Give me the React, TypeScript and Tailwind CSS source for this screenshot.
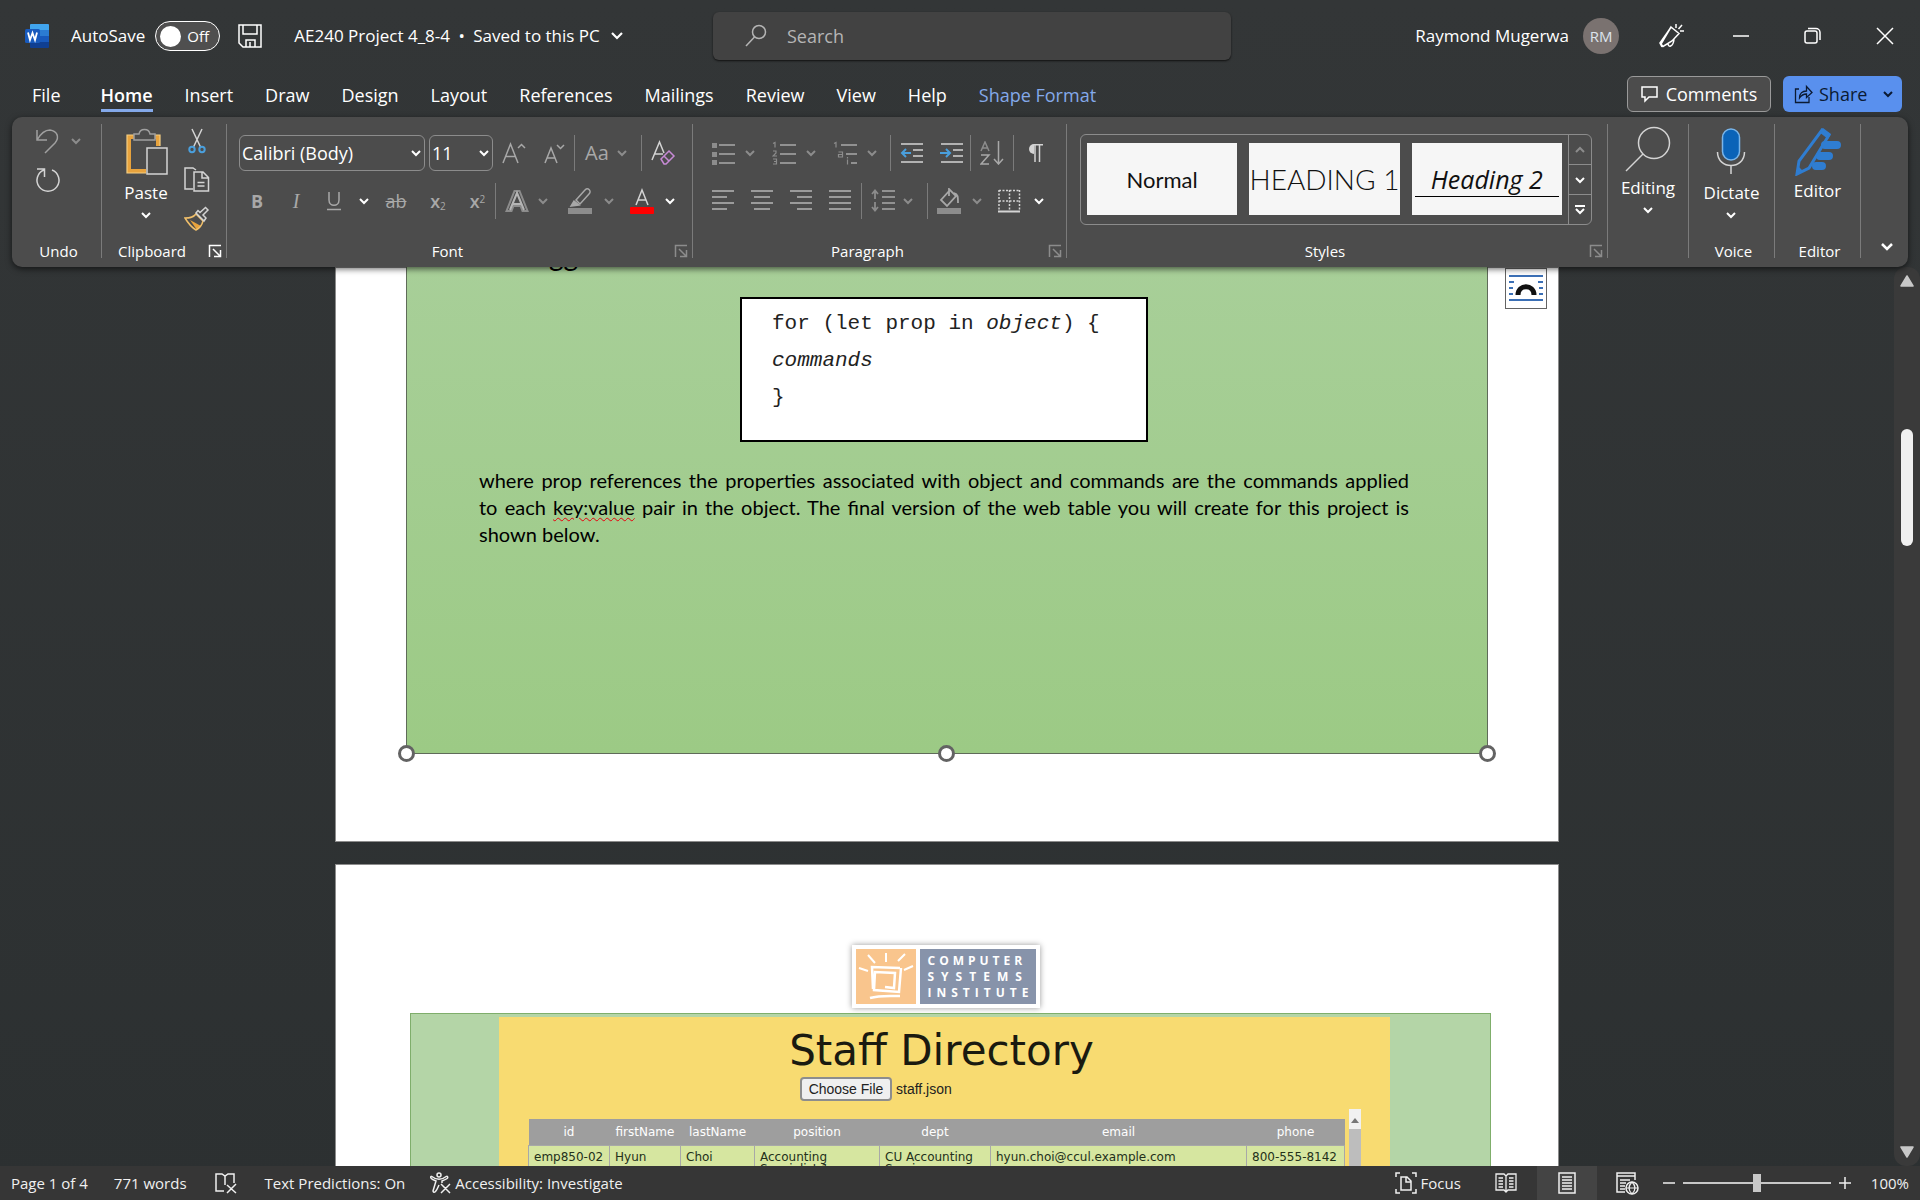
import { useState } from 'react';
import type { ReactNode } from 'react';
import { clsx } from 'clsx';

const TABS = ['File', 'Home', 'Insert', 'Draw', 'Design', 'Layout', 'References', 'Mailings', 'Review', 'View', 'Help', 'Shape Format'];

const COLUMNS = [
  { name: 'id', value: 'emp850-02', width: 'w-[81px]' },
  { name: 'firstName', value: 'Hyun', width: 'w-[71px]' },
  { name: 'lastName', value: 'Choi', width: 'w-[74px]' },
  { name: 'position', value: 'Accounting Specialist 1', width: 'w-[125px]' },
  { name: 'dept', value: 'CU Accounting Services', width: 'w-[111px]' },
  { name: 'email', value: 'hyun.choi@ccul.example.com', width: 'w-[256px]' },
  { name: 'phone', value: '800-555-8142', width: 'w-[98px]' },
];

/* ---------- Shared bits ---------- */

function Svg({ w = 24, h = 24, children, className }: { w?: number; h?: number; children: ReactNode; className?: string }) {
  return (
    <svg
      width={w}
      height={h}
      viewBox={`0 0 ${w} ${h}`}
      fill="none"
      stroke="currentColor"
      strokeWidth="1.5"
      aria-hidden="true"
      className={clsx('shrink-0', className)}
    >
      {children}
    </svg>
  );
}

function Chevron({ className }: { className?: string }) {
  return (
    <Svg w={10} h={8} className={className}>
      <path d="M1 2l4 4 4-4" strokeWidth="2" />
    </Svg>
  );
}

function Tool({ label, width, dim, children }: { label: string; width: string; dim?: boolean; children: ReactNode }) {
  return (
    <button
      type="button"
      aria-label={label}
      className={clsx('flex h-9 shrink-0 items-center justify-center', width, dim ? 'text-[#8c8c8c]' : 'text-[#d4d4d4]')}
    >
      {children}
    </button>
  );
}

function Sep() {
  return <div className="h-9 w-px shrink-0 bg-[#7b7b7b]" />;
}

function Launcher({ label, dim }: { label: string; dim?: boolean }) {
  return (
    <button type="button" aria-label={label} className={clsx('absolute right-1 bottom-0', dim ? 'text-[#8c8c8c]' : 'text-white')}>
      <Svg w={14} h={14}>
        <path d="M1.500 13V1.500H13M5 5l7 7M12.500 6v6.500H6" />
      </Svg>
    </button>
  );
}

function Group({ label, width, launcher, dim, children }: {
  label?: string;
  width: string;
  launcher?: boolean;
  dim?: boolean;
  children: ReactNode;
}) {
  return (
    <section className={clsx('relative flex flex-col border-r border-[#7b7b7b]', width)}>
      <div className="min-h-0 flex-1">{children}</div>
      {label && (
        <div className={clsx('text-center text-[15px] leading-[14px] text-white', launcher ? 'pr-6' : 'pl-1')}>{label}</div>
      )}
      {launcher && <Launcher label={`${label} settings`} dim={dim} />}
    </section>
  );
}

/* ---------- Title bar ---------- */

function WordLogo() {
  return (
    <Svg w={26} h={26}>
      <g stroke="none">
        <path d="M6 2a1 1 0 0 1 1-1h17a1 1 0 0 1 1 1v5H6z" fill="#41a5ee" />
        <path d="M6 7h19v6H6z" fill="#2b7cd3" />
        <path d="M6 13h19v6H6z" fill="#185abd" />
        <path d="M6 19h19v5a1 1 0 0 1-1 1H7a1 1 0 0 1-1-1z" fill="#103f91" />
        <rect x="1" y="6" width="15" height="14" rx="1.500" fill="#185abd" />
      </g>
      <path d="M4 9.500l2 7.500 2.500-7 2.500 7 2-7.500" stroke="#fff" strokeWidth="1.800" />
    </Svg>
  );
}

function TitleBar() {
  const [autoSave, setAutoSave] = useState(false);

  return (
    <header className="flex h-[72px] shrink-0 items-center pl-6 text-white">
      <div className="flex flex-1 items-center pr-[26px]">
        <WordLogo />
        <label className="ml-[21px] flex items-center gap-2.5 text-[17px]">
          AutoSave
          <input type="checkbox" className="sr-only" checked={autoSave} onChange={e => setAutoSave(e.target.checked)} />
          <span className="flex h-[30px] w-[65px] items-center gap-1.5 rounded-full border border-white bg-[#4f4f4f] pl-1">
            <span className="h-[21px] w-[21px] rounded-full bg-white" />
            <span className="text-[15px]">{autoSave ? 'On' : 'Off'}</span>
          </span>
        </label>
        <button type="button" aria-label="Save" className="ml-[18px]">
          <Svg>
            <path d="M1 1h22v22H5l-4-4zM5 1v9h14V1M8 23v-7h9v7M12 18v5" />
          </Svg>
        </button>
        <button type="button" className="ml-8 flex items-center gap-2.5 text-[17px] whitespace-nowrap">
          <span>AE240 Project 4_8-4 <span className="mx-1">•</span> Saved to this PC</span>
          <Svg w={14} h={10}>
            <path d="M2 2l5 5 5-5" strokeWidth="2.200" />
          </Svg>
        </button>
      </div>

      <label className="flex h-12 w-[518px] items-center gap-5 rounded-md bg-[#424242] px-8 text-[#b5b5b5] shadow-[0_1px_2px_#111]">
        <Svg w={22} h={24}>
          <circle cx="14" cy="8" r="6.500" />
          <path d="M9.500 13L1 22" />
        </Svg>
        <input type="text" aria-label="Search" placeholder="Search" className="w-full bg-transparent text-[18px] outline-none placeholder:text-[#b5b5b5]" />
      </label>

      <div className="flex flex-1 items-center justify-end pr-[26px]">
        <span className="text-[17px]">Raymond Mugerwa</span>
        <span className="ml-3.5 flex h-9 w-9 items-center justify-center rounded-full bg-[#7a7270] text-[15px] text-[#dde3ec]">RM</span>
        <button type="button" aria-label="Coming soon" className="ml-[39px]">
          <Svg w={26} h={26}>
            <path d="M13 4l8 6.500-7 7.500-9 5.500-2-2.500zM13 4c-3 5-6 9-11 16l2 4M10 20.500c0 4 5 4 6-4M18 1v4M24 2l-3.500 4M22 8h4" />
          </Svg>
        </button>
        <button type="button" aria-label="Minimize" className="ml-[49px]">
          <Svg w={16} h={18}><path d="M0 9h16" /></Svg>
        </button>
        <button type="button" aria-label="Restore" className="ml-[55px]">
          <Svg w={17} h={18}>
            <rect x="1" y="4" width="12" height="12" rx="2" />
            <path d="M4 1.500h8a4 4 0 0 1 4 4V13" />
          </Svg>
        </button>
        <button type="button" aria-label="Close" className="ml-[55px]">
          <Svg w={18} h={18}><path d="M1 1l16 16M17 1L1 17" /></Svg>
        </button>
      </div>
    </header>
  );
}

function TabBar() {
  return (
    <nav className="flex h-[45px] shrink-0 items-start pt-1 pr-[18px] pl-8 text-[18px] text-white">
      <div className="flex flex-1 gap-8 pt-1.5 whitespace-nowrap">
        {TABS.map(tab => (
          <a
            key={tab}
            href="#"
            className={clsx(
              'border-b-[3px] leading-[27px]',
              tab === 'File' && 'mr-2',
              tab === 'Home' ? 'border-[#84a9ea] font-semibold' : 'border-transparent',
              tab === 'Shape Format' && 'text-[#84a9ea]',
            )}
          >
            {tab}
          </a>
        ))}
      </div>
      <button type="button" className="flex h-9 w-36 items-center justify-center gap-2 rounded-md border border-[#9a9a9a] bg-[#4c4c4c]">
        <Svg w={17} h={18}><path d="M1 2h15v10H8l-4 4v-4H1z" /></Svg>
        Comments
      </button>
      <button type="button" className="ml-3 flex h-9 w-[119px] items-center rounded-md bg-[#5990ee] pl-[11px] text-[#0b1a33]">
        <Svg w={19} h={20}>
          <path d="M5 5H1.500v13.500H15V13M5.500 14c0-5 3-7 7-7V2.500L18 8.500l-5.500 5V10c-3 0-5 1-7 4z" strokeWidth="1.300" />
        </Svg>
        <span className="ml-1.5">Share</span>
        <Chevron className="ml-4" />
      </button>
    </nav>
  );
}

/* ---------- Ribbon ---------- */

function UndoGroup() {
  return (
    <Group label="Undo" width="w-[90px]">
      <div className="flex flex-col gap-[13px] pt-1 pl-[23px]">
        <div className="flex items-center gap-2.5 text-[#8c8c8c]">
          <button type="button" aria-label="Undo">
            <Svg w={26} h={26} className="text-[#a0a0a0]"><path d="M2 2v10h10M2 12C6 5 10 2 15 2c7 1 10 7 5 13L10 25" /></Svg>
          </button>
          <Chevron />
        </div>
        <button type="button" aria-label="Repeat" className="w-[26px] text-[#d4d4d4]">
          <Svg w={26} h={26}><path d="M2 2h7.500v8M9 3a11 11 0 1 0 8 0" /></Svg>
        </button>
      </div>
    </Group>
  );
}

function ClipboardGroup() {
  return (
    <Group label="Clipboard" width="w-[125px]" launcher>
      <div className="flex pt-1 pl-[22px]">
        <button type="button" className="flex w-[44px] flex-col items-center text-[17px] leading-6 text-white">
          <Svg w={44} h={48}>
            <path d="M12 9H5v34h17M27 9h7v9" stroke="#e8a33d" strokeWidth="4" />
            <path d="M12 7H3v38h19M26 7h10v11" stroke="#f6cf83" strokeWidth="1.200" />
            <path d="M10 12V6h5c1-6 10-6 11 0h5v6z" stroke="#a0a0a0" fill="#4c4c4c" />
            <rect x="23" y="20" width="20" height="26" stroke="#d4d4d4" fill="#4c4c4c" />
          </Svg>
          <span className="mt-[5px]">Paste</span>
          <Chevron className="mt-1.5" />
        </button>
        <div className="ml-4 flex flex-col gap-[13px] text-[#d4d4d4]">
          <button type="button" aria-label="Cut">
            <Svg w={26} h={26}>
              <path d="M8 1l8.500 18M18 1L9.500 19" />
              <circle cx="8" cy="21.500" r="2.700" stroke="#4a9fdc" strokeWidth="2" />
              <circle cx="18" cy="21.500" r="2.700" stroke="#4a9fdc" strokeWidth="2" />
            </Svg>
          </button>
          <button type="button" aria-label="Copy">
            <Svg w={26} h={26}><path d="M9 22H1V1h8l3 2M10 5h9l5.500 5.500V24H10zM18 5v6h6M13.500 15.500h7M13.500 19h7" /></Svg>
          </button>
          <button type="button" aria-label="Format Painter">
            <Svg w={26} h={26}>
              <path d="M6 14l11 6-4 4z" fill="#e8a33d" stroke="none" />
              <path d="M12 8C9 12 5 12 1 12c3 5 6 9 11 12 4-2 6-5 7-9z" stroke="#f0bf6a" />
              <path d="M12 7l8 8 2-3-3-3 5-5-2.500-2.500-5.500 5-2-2z" />
            </Svg>
          </button>
        </div>
      </div>
    </Group>
  );
}

function FontGroup() {
  return (
    <Group label="Font" width="w-[466px]" launcher dim>
      <div className="flex flex-col gap-3 pt-[11px] pl-3">
        <div className="flex items-center">
          <span className="relative mr-1 w-[186px]">
            <select aria-label="Font" className="h-9 w-full appearance-none rounded-md border border-[#8c8c8c] bg-transparent pl-0.5 text-[18px] text-white">
              <option>Calibri (Body)</option>
            </select>
            <Chevron className="pointer-events-none absolute top-3.5 right-1 text-white" />
          </span>
          <span className="relative w-16">
            <select aria-label="Font size" className="h-9 w-full appearance-none rounded-md border border-[#8c8c8c] bg-transparent pl-0.5 text-[18px] text-white">
              <option>11</option>
            </select>
            <Chevron className="pointer-events-none absolute top-3.5 right-1 text-white" />
          </span>
          <Tool label="Grow font" width="w-[42px]" dim>
            <Svg className="text-[#a8a8a8]"><path d="M1 22L8.500 3 16 22M4 15.500h9.500M16 7l3.500-3.500L23 7" /></Svg>
          </Tool>
          <Tool label="Shrink font" width="w-[39px]" dim>
            <Svg className="text-[#a8a8a8]"><path d="M2 22L8 7l6 15M4.500 17h7M14 4l3.500 3.500L21 4" /></Svg>
          </Tool>
          <Sep />
          <Tool label="Change case" width="w-[66px]" dim>
            <span className="mr-2 text-[20px] text-[#a8a8a8]">Aa</span>
            <Chevron className="mr-1" />
          </Tool>
          <Sep />
          <Tool label="Clear formatting" width="w-[42px]">
            <Svg w={26} h={26}>
              <path d="M2 20L9.500 2 14 13M5 14h8" />
              <path d="M11 19l8-8 5 5-8 8h-2zM14 16l5 5" stroke="#c78ad6" />
            </Svg>
          </Tool>
        </div>
        <div className="flex items-center text-[#a8a8a8]">
          <Tool label="Bold" width="w-9" dim><b className="text-[18px] text-[#a8a8a8]">B</b></Tool>
          <Tool label="Italic" width="w-[42px]" dim><i className="font-['Liberation_Serif'] text-[20px] text-[#a8a8a8]">I</i></Tool>
          <Tool label="Underline" width="w-[34px]" dim>
            <Svg w={16} h={20} className="text-[#a8a8a8]"><path d="M3 1v8c0 7 10 7 10 0V1M1 18.500h14" /></Svg>
          </Tool>
          <Tool label="Underline style" width="w-[25px]"><Chevron className="text-white" /></Tool>
          <Tool label="Strikethrough" width="w-10" dim><s className="text-[18px] text-[#a8a8a8]">ab</s></Tool>
          <Tool label="Subscript" width="w-11" dim>
            <span className="text-[18px] font-semibold text-[#a8a8a8]">x<sub className="text-[10px] font-normal">2</sub></span>
          </Tool>
          <Tool label="Superscript" width="w-[35px]" dim>
            <span className="text-[18px] font-semibold text-[#a8a8a8]">x<sup className="text-[10px] font-normal">2</sup></span>
          </Tool>
          <Sep />
          <Tool label="Text effects" width="w-[42px]" dim>
            <Svg>
              <path d="M1.500 22L9.500 2h5l8 20h-5l-2-5h-7l-2 5z" strokeWidth="2" />
              <path d="M5 21L12 4l7 17M8 15h8" stroke="#b5b5b5" strokeWidth="2" />
            </Svg>
          </Tool>
          <Chevron className="mr-2 text-[#8c8c8c]" />
          <Tool label="Highlight color" width="w-12" dim>
            <Svg w={26} h={26}>
              <path d="M1 20h24v6H1z" fill="currentColor" stroke="none" />
              <path d="M9 12L18 2c3-3 7 1 4 4l-9 10zM9 12l4 4" stroke="#a8a8a8" />
              <path d="M7 13l5 4-8 1z" fill="#a8a8a8" stroke="#a8a8a8" />
            </Svg>
          </Tool>
          <Chevron className="mr-1 text-[#8c8c8c]" />
          <Tool label="Font color" width="w-[47px]">
            <Svg w={26} h={26}>
              <path d="M7 17L13 2l6 15M9 12h8" />
              <rect x="1" y="19" width="24" height="7" rx="1" fill="#f00" stroke="none" />
            </Svg>
          </Tool>
          <Chevron className="text-white" />
        </div>
      </div>
    </Group>
  );
}

function Split({ label, children }: { label: string; children: ReactNode }) {
  return (
    <div className="mr-0.5 flex items-center">
      <Tool label={label} width="w-[39px]" dim>{children}</Tool>
      <span className="flex w-5 justify-center pr-1 text-[#8c8c8c]"><Chevron /></span>
    </div>
  );
}

function ParagraphGroup() {
  return (
    <Group label="Paragraph" width="w-[374px]" launcher dim>
      <div className="flex flex-col gap-3 pt-[11px] pl-2.5">
        <div className="flex items-center">
          <Split label="Bullets">
            <Svg>
              <path d="M8 4h16M8 13h16M8 22h16" stroke="#a8a8a8" />
              <path d="M1 2h5v5H1zM1 11h5v5H1zM1 19h5v5H1z" fill="currentColor" stroke="none" />
            </Svg>
          </Split>
          <Split label="Numbering">
            <Svg>
              <path d="M8 4h16M8 13h16M8 22h16" stroke="#a8a8a8" />
              <path d="M1 2.500l2-1v5M1 10h3v2l-3 3h4M1 18h3.500v5H1M2 20.500h2" strokeWidth="1.200" />
            </Svg>
          </Split>
          <Split label="Multilevel list">
            <Svg>
              <path d="M8 4h16M13 13h11M18 22h6" stroke="#a8a8a8" />
              <path d="M1 2.500l2-1v5M5.500 11h4v5h-4v-2.500h4M14.500 18.500v5M14.500 16v1.500" strokeWidth="1.200" />
            </Svg>
          </Split>
          <span className="w-1" />
          <Sep />
          <Tool label="Decrease indent" width="w-[42px]">
            <Svg>
              <path d="M1 3h22M13 9h10M13 15h10M1 21h22" />
              <path d="M11 12H2M6 8l-4 4 4 4" stroke="#4a9fdc" strokeWidth="2" />
            </Svg>
          </Tool>
          <Tool label="Increase indent" width="w-[37px]">
            <Svg>
              <path d="M1 3h22M13 9h10M13 15h10M1 21h22" />
              <path d="M0 12h10M6 8l4 4-4 4" stroke="#4a9fdc" strokeWidth="2" />
            </Svg>
          </Tool>
          <Sep />
          <Tool label="Sort" width="w-[42px]" dim>
            <Svg>
              <path d="M1 10l4-9 4 9M2.500 7h5" />
              <path d="M1 14h8l-8 9h8M18.500 0v22M14 18l4.500 5 4.500-5" stroke="#a8a8a8" />
            </Svg>
          </Tool>
          <Sep />
          <Tool label="Show formatting marks" width="w-[42px]">
            <Svg w={16} h={20}>
              <path d="M7 1.700h9M8 1v18M12.500 1v18" />
              <path d="M7 11a5 5 0 1 1 0-10z" fill="currentColor" stroke="none" />
            </Svg>
          </Tool>
        </div>
        <div className="flex items-center">
          <Tool label="Align left" width="w-[39px]">
            <Svg className="text-[#b5b5b5]"><path d="M1 2h22M1 8h15M1 14h22M1 20h15" /></Svg>
          </Tool>
          <Tool label="Center" width="w-[39px]">
            <Svg className="text-[#b5b5b5]"><path d="M1 2h22M4 8h16M1 14h22M4 20h16" /></Svg>
          </Tool>
          <Tool label="Align right" width="w-[39px]">
            <Svg className="text-[#b5b5b5]"><path d="M1 2h22M8 8h15M1 14h22M8 20h15" /></Svg>
          </Tool>
          <Tool label="Justify" width="w-[39px]">
            <Svg className="text-[#b5b5b5]"><path d="M1 2h22M1 8h22M1 14h22M1 20h22" /></Svg>
          </Tool>
          <span className="w-0.5" />
          <Sep />
          <Tool label="Line spacing" width="w-[41px]" dim>
            <Svg>
              <path d="M11 2h13M11 8h13M11 14h13M11 20h13" stroke="#a8a8a8" />
              <path d="M4 2v8M4 13v8M1 5l3-3.500L7 5M1 18l3 3.500L7 18" strokeWidth="1.800" />
            </Svg>
          </Tool>
          <Chevron className="mr-[14px] text-[#8c8c8c]" />
          <Sep />
          <Tool label="Shading" width="w-[42px]" dim>
            <Svg w={24} h={26}>
              <path d="M0 20h24v6H0z" fill="currentColor" stroke="none" />
              <path d="M13 2L4 12l6 6 9-10-7-7v7M17 5c4 1 4 4 4 10" stroke="#a8a8a8" strokeWidth="1.800" />
            </Svg>
          </Tool>
          <span className="flex w-3.5 justify-center text-[#8c8c8c]"><Chevron /></span>
          <Tool label="Borders" width="w-[50px]">
            <Svg>
              <path d="M2 1.500h21M2 12h21M2 1v20M12.500 1v20M22.500 1v20" strokeDasharray="2 1.500" />
              <path d="M1 22.500h22" strokeWidth="2" />
            </Svg>
          </Tool>
          <Chevron className="text-white" />
        </div>
      </div>
    </Group>
  );
}

function StylesGroup() {
  return (
    <Group label="Styles" width="min-w-0 flex-1" launcher dim>
      <div className="mt-2.5 mr-[15px] ml-[13px] flex h-[91px] rounded-md border border-[#8c8c8c]">
        <div className="grid flex-1 grid-cols-3 items-start gap-3 overflow-hidden px-1.5 pt-2 font-['Lato'] whitespace-nowrap text-[#111]">
          <button type="button" className="h-[72px] bg-[#f6f6f6] text-[22px]">Normal</button>
          <button type="button" className="h-[72px] bg-[#f6f6f6] text-[28px] font-light">HEADING 1</button>
          <button type="button" className="h-[72px] bg-[#f6f6f6] px-[3px] font-['Open_Sans'] text-[25px] italic">
            <span className="block border-b border-black leading-[34px]">Heading 2</span>
          </button>
        </div>
        <div className="flex w-[23px] flex-col divide-y divide-[#8c8c8c] border-l border-[#8c8c8c] text-white">
          <button type="button" aria-label="Previous styles" className="flex flex-1 items-center justify-center text-[#8c8c8c]">
            <Chevron className="rotate-180" />
          </button>
          <button type="button" aria-label="Next styles" className="flex flex-1 items-center justify-center">
            <Chevron />
          </button>
          <button type="button" aria-label="More styles" className="flex flex-1 flex-col items-center justify-center">
            <span className="h-0.5 w-2.5 bg-white" />
            <Chevron />
          </button>
        </div>
      </div>
    </Group>
  );
}

function Ribbon() {
  return (
    <div className="relative z-10 mx-3 flex h-[150px] shrink-0 rounded-[10px] bg-[#4c4c4c] pt-[7px] pb-[9px] shadow-[0_2px_6px_rgba(0,0,0,0.6)]">
      <UndoGroup />
      <ClipboardGroup />
      <FontGroup />
      <ParagraphGroup />
      <StylesGroup />
      <Group width="w-[81px]">
        <button type="button" className="mx-auto flex flex-col items-center pt-0.5 text-[17px] leading-6 text-white">
          <Svg w={46} h={46} className="text-[#d4d4d4]">
            <circle cx="29" cy="17" r="15.500" />
            <path d="M18 28L1 45" />
          </Svg>
          <span className="mt-1">Editing</span>
          <Chevron className="mt-1.5" />
        </button>
      </Group>
      <Group label="Voice" width="w-[86px]">
        <button type="button" className="mx-auto flex flex-col items-center pt-1 text-[17px] leading-6 text-white">
          <Svg w={30} h={48} className="text-[#d4d4d4]">
            <rect x="6.500" y="1" width="17" height="31" rx="8.500" fill="#0a63b8" stroke="#79b5ea" />
            <path d="M1.500 24c0 18 27 18 27 0M15 37.500V46" />
          </Svg>
          <span className="mt-[5px]">Dictate</span>
          <Chevron className="mt-1.5" />
        </button>
      </Group>
      <Group label="Editor" width="w-[86px]">
        <button type="button" className="mx-auto flex flex-col items-center pt-1 text-[17px] leading-6 text-white">
          <Svg w={48} h={48} className="text-[#2f7dd1]">
            <path d="M28 2l7 5-20 33-12 6 2-13z" strokeWidth="3" />
            <path d="M25 4l4-4 8 6-3 5zM2 47l2-9 5 5z" fill="currentColor" stroke="none" />
            <path d="M31 17h12M26 28h9M22 38h6" strokeWidth="8" strokeLinecap="round" />
          </Svg>
          <span className="mt-[3px]">Editor</span>
        </button>
      </Group>
      <div className="flex w-[47px] items-end justify-end pr-3.5 pb-1.5">
        <button type="button" aria-label="Ribbon display options" className="text-white">
          <Svg w={14} h={10}><path d="M2 2l5 5 5-5" strokeWidth="2.500" /></Svg>
        </button>
      </div>
    </div>
  );
}

/* ---------- Document ---------- */

function Handle({ className }: { className: string }) {
  return <span className={clsx('absolute -bottom-[9px] h-[17px] w-[17px] rounded-full border-[3px] border-[#636363] bg-white', className)} />;
}

function PageOne() {
  return (
    <article className="relative w-full max-w-[1224px] border border-[#8c8c8c] bg-white pr-[70px] pb-[87px] pl-[70px]">
      <div className="relative -mt-[23px] border border-[#5f6b59] bg-linear-to-b from-[#a8cf99] to-[#9cca85] pr-[78px] pb-[205px] pl-[72px] font-['Lato'] text-[20px] leading-[27px] text-black">
        <p className="mb-[33px] pl-[70px] text-[28px] leading-[18px]">gg</p>
        <div className="ml-[261px] h-[145px] w-[408px] border-2 border-black bg-white pt-1.5 pl-[30px] font-['Liberation_Mono'] text-[21px] leading-[37px] text-[#222]">
          <div>for (let prop in <i>object</i>) {'{'}</div>
          <div><i>commands</i></div>
          <div>{'}'}</div>
        </div>
        <p className="mt-[25px] text-justify">
          where prop references the properties associated with object and commands are the commands applied to{'\u00a0'}each{' '}
          <span className="underline decoration-red-600 decoration-wavy decoration-1 underline-offset-2">key:value</span>{' '}
          pair in the object. The final version of the web table you will create for this project is shown below.
        </p>
        <Handle className="-left-[9px]" />
        <Handle className="left-1/2 -ml-[9px]" />
        <Handle className="-right-[9px]" />
      </div>
      <button type="button" aria-label="Layout options" className="absolute top-0 right-[11px] h-[41px] w-[42px] border border-[#636363] bg-white">
        <Svg w={40} h={38}>
          <path d="M3 6h34M3 12h5M32 12h5M3 18h4M33 18h4M3 24h4M33 24h4M3 30h34" stroke="#3b6fb5" strokeWidth="2" />
          <path d="M12 25c0-11 16-11 16 0" stroke="#111" strokeWidth="5" />
        </Svg>
      </button>
    </article>
  );
}

function InstituteLogo() {
  return (
    <div className="mx-auto flex h-[63px] w-[188px] gap-1 bg-white p-1 shadow-[0_0_6px_rgba(0,0,0,0.4)]">
      <div className="w-[60px] bg-[#f9c58d]">
        <Svg w={60} h={55} className="text-white">
          <path d="M12 6l7 8M30 4v9M49 5l-7 7M3 19l9 3M57 17l-9 4" strokeWidth="2" />
          <path d="M44 19l-28-1 1 22M45 19l-2 24-25-2 1-18 20 1-1 15-9-1M14 49c10-3 20-2 30-2" strokeWidth="2.500" />
        </Svg>
      </div>
      <div className="flex flex-1 flex-col justify-center bg-[#8793aa] pl-2 text-[12px] leading-4 font-bold text-white">
        <span className="tracking-[4px]">COMPUTER</span>
        <span className="tracking-[7px]">SYSTEMS</span>
        <span className="tracking-[5px]">INSTITUTE</span>
      </div>
    </div>
  );
}

function PageTwo() {
  return (
    <article className="mt-[22px] w-full max-w-[1224px] border border-b-0 border-[#8c8c8c] bg-white pt-20 pr-[67px] pl-[74px]">
      <div className="pr-2.5">
        <InstituteLogo />
      </div>
      <div className="mt-[5px] border border-b-0 border-[#7fae6b] bg-[#b4d5a7] px-[88px] pt-[3px] pr-[100px]">
        <div className="h-[300px] bg-[#f8db71] px-[29px] pt-2.5 font-['DejaVu_Sans']">
          <h1 className="pr-1.5 text-center text-[42px] leading-[48px] text-[#1a1a10]">Staff Directory</h1>
          <div className="mt-0.5 flex items-center gap-1 pl-[272px] font-['Liberation_Sans'] text-[14px] text-[#222]">
            <button type="button" className="h-6 w-[92px] rounded-sm border-2 border-[#8d8d8d] bg-[#efefef] leading-4">Choose File</button>
            <span>staff.json</span>
          </div>
          <div className="mt-2 flex">
            <table className="mt-2.5 w-[816px] table-fixed border-collapse text-[12px] text-[#23301a]">
              <thead>
                <tr className="h-[26px] bg-[#9e9e9e] text-white">
                  {COLUMNS.map(c => (
                    <th key={c.name} className={clsx('text-center font-normal', c.width)}>{c.name}</th>
                  ))}
                </tr>
              </thead>
              <tbody>
                <tr className="bg-[#d6e6a0]">
                  {COLUMNS.map(c => (
                    <td key={c.name} className="border border-[#a8a8a8] px-[5px] pt-[5px] align-top leading-3">{c.value}</td>
                  ))}
                </tr>
              </tbody>
            </table>
            <div className="ml-1 flex w-4 flex-col items-center bg-[#f1f1f1] pt-2 text-[#777]">
              <Svg w={8} h={6}><path d="M0 6l4-5 4 5z" fill="currentColor" stroke="none" /></Svg>
              <span className="mt-1.5 h-24 w-3 bg-[#bdbdbd]" />
            </div>
          </div>
        </div>
      </div>
    </article>
  );
}

function ScrollBar() {
  return (
    <div className="flex w-[26px] shrink-0 flex-col items-center rounded-xl bg-[#3a3a3a] py-2 text-[#c8c8c8]">
      <Svg w={14} h={12}><path d="M7 1l6 10H1z" fill="currentColor" strokeLinejoin="round" /></Svg>
      <div className="mt-[142px] h-[117px] w-3 rounded-full bg-[#f0f0f0]" />
      <div className="flex-1" />
      <Svg w={14} h={12}><path d="M7 11L1 1h12z" fill="currentColor" strokeLinejoin="round" /></Svg>
    </div>
  );
}

/* ---------- Status bar ---------- */

function StatusBar() {
  const [zoom, setZoom] = useState(50);

  return (
    <footer className="flex h-[34px] shrink-0 items-center bg-[#363636] pr-[11px] pl-[11px] text-[15px] whitespace-nowrap text-[#f0f0f0]">
      <span>Page 1 of 4</span>
      <span className="ml-[26px]">771 words</span>
      <button type="button" aria-label="Proofing" className="ml-7">
        <Svg w={22} h={22}><path d="M9 19H1V2h6l3 2 3-2h6v9M10 4v9M12 13l9 8M21 12l-9 9" /></Svg>
      </button>
      <span className="ml-7">Text Predictions: On</span>
      <button type="button" className="ml-6 flex items-center gap-1">
        <Svg w={22} h={22}>
          <circle cx="10" cy="3" r="2" />
          <path d="M2 4c-1 2 0 3 5 5l-3 10c1 3 3 1 6-6M18 4c2 2 0 3-5 5v2M2 4c5 4 11 4 16 0M12 12l9 9M21 12l-9 9" />
        </Svg>
        Accessibility: Investigate
      </button>
      <button type="button" className="ml-auto flex items-center gap-1">
        <Svg w={22} h={22}>
          <path d="M1 5V1h4M17 1h4v4M1 17v4h4M21 17v4h-4M6 5h6l4 4v9H6zM11 5v5h5" />
        </Svg>
        Focus
      </button>
      <button type="button" aria-label="Read mode" className="ml-[34px]">
        <Svg w={22} h={22}>
          <path d="M1 2h8l2 2 2-2h8v16h-8l-2 2-2-2H1zM11 4v15M3.500 6H8M3.500 9H8M3.500 12H8M3.500 15H8M14 6h4.500M14 9h4.500M14 12h4.500M14 15h4.500" strokeWidth="1.300" />
        </Svg>
      </button>
      <button type="button" aria-label="Print layout" className="ml-5 flex h-[34px] w-[60px] items-center justify-center bg-[#444]">
        <Svg w={18} h={22}>
          <path d="M1 1h16v20H1zM4 5h10M4 8h10M4 11h10M4 14h10M4 17h10" />
        </Svg>
      </button>
      <button type="button" aria-label="Web layout" className="ml-[18px]">
        <Svg w={24} h={24}>
          <path d="M10 21H2V2h18v7M2 5h18M5 9h10M5 12h6M5 15h5M5 18h5" />
          <circle cx="17" cy="17" r="6" />
          <path d="M11 17h12M17 11c-4 4-4 8 0 12M17 11c4 4 4 8 0 12" strokeWidth="1.200" />
        </Svg>
      </button>
      <button type="button" aria-label="Zoom out" className="ml-6">
        <Svg w={12} h={12}><path d="M0 6h12" /></Svg>
      </button>
      <input
        type="range"
        aria-label="Zoom"
        value={zoom}
        onChange={e => setZoom(Number(e.target.value))}
        className="mx-2 h-5 w-[148px] appearance-none bg-transparent [&::-webkit-slider-runnable-track]:h-0.5 [&::-webkit-slider-runnable-track]:bg-[#c8c8c8] [&::-webkit-slider-thumb]:-mt-2 [&::-webkit-slider-thumb]:h-[18px] [&::-webkit-slider-thumb]:w-2 [&::-webkit-slider-thumb]:appearance-none [&::-webkit-slider-thumb]:bg-[#c8c8c8]"
      />
      <button type="button" aria-label="Zoom in">
        <Svg w={12} h={12}><path d="M0 6h12M6 0v12" /></Svg>
      </button>
      <span className="ml-5">100%</span>
    </footer>
  );
}

export default function App() {
  return (
    <div className="flex h-screen flex-col overflow-hidden bg-linear-to-b from-[#333637] to-[#2c3031] font-['Open_Sans',sans-serif]">
      <TitleBar />
      <TabBar />
      <Ribbon />
      <div className="flex min-h-0 flex-1">
        <main className="flex min-w-0 flex-1 flex-col items-center overflow-hidden">
          <PageOne />
          <PageTwo />
        </main>
        <ScrollBar />
      </div>
      <StatusBar />
    </div>
  );
}
